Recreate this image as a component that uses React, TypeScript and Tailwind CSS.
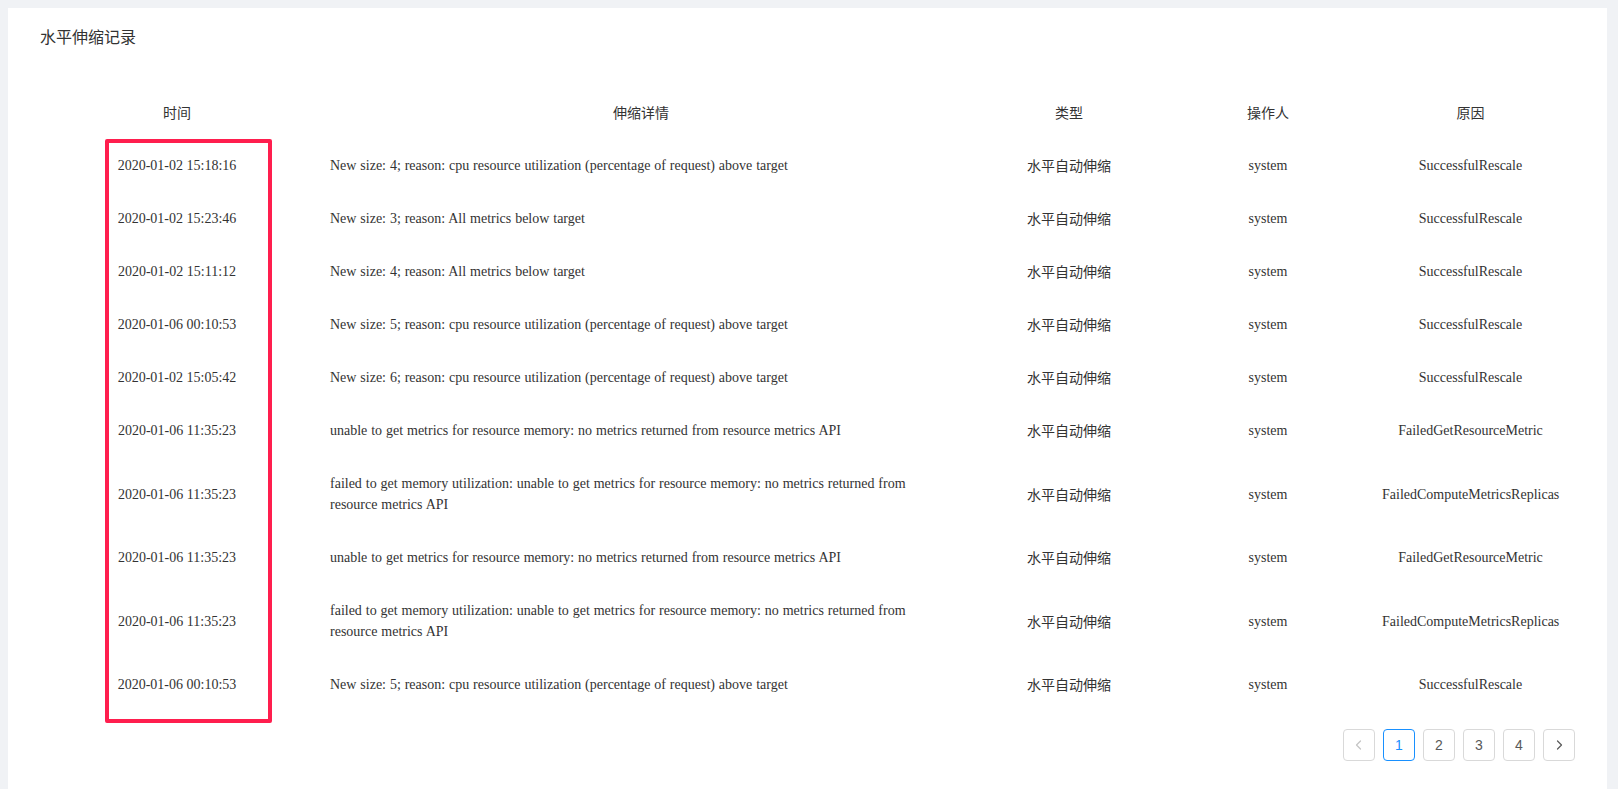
import React from "react"

type Record = {
  time: string
  detail: string
  type: string
  operator: string
  reason: string
}

const records: Record[] = [
  { time: "2020-01-02 15:18:16", detail: "New size: 4; reason: cpu resource utilization (percentage of request) above target", type: "水平自动伸缩", operator: "system", reason: "SuccessfulRescale" },
  { time: "2020-01-02 15:23:46", detail: "New size: 3; reason: All metrics below target", type: "水平自动伸缩", operator: "system", reason: "SuccessfulRescale" },
  { time: "2020-01-02 15:11:12", detail: "New size: 4; reason: All metrics below target", type: "水平自动伸缩", operator: "system", reason: "SuccessfulRescale" },
  { time: "2020-01-06 00:10:53", detail: "New size: 5; reason: cpu resource utilization (percentage of request) above target", type: "水平自动伸缩", operator: "system", reason: "SuccessfulRescale" },
  { time: "2020-01-02 15:05:42", detail: "New size: 6; reason: cpu resource utilization (percentage of request) above target", type: "水平自动伸缩", operator: "system", reason: "SuccessfulRescale" },
  { time: "2020-01-06 11:35:23", detail: "unable to get metrics for resource memory: no metrics returned from resource metrics API", type: "水平自动伸缩", operator: "system", reason: "FailedGetResourceMetric" },
  { time: "2020-01-06 11:35:23", detail: "failed to get memory utilization: unable to get metrics for resource memory: no metrics returned from resource metrics API", type: "水平自动伸缩", operator: "system", reason: "FailedComputeMetricsReplicas" },
  { time: "2020-01-06 11:35:23", detail: "unable to get metrics for resource memory: no metrics returned from resource metrics API", type: "水平自动伸缩", operator: "system", reason: "FailedGetResourceMetric" },
  { time: "2020-01-06 11:35:23", detail: "failed to get memory utilization: unable to get metrics for resource memory: no metrics returned from resource metrics API", type: "水平自动伸缩", operator: "system", reason: "FailedComputeMetricsReplicas" },
  { time: "2020-01-06 00:10:53", detail: "New size: 5; reason: cpu resource utilization (percentage of request) above target", type: "水平自动伸缩", operator: "system", reason: "SuccessfulRescale" },
]

function Chevron({ dir, color }: { dir: "left" | "right"; color: string }) {
  return (
    <svg width="12" height="12" viewBox="0 0 12 12" fill="none">
      <polyline
        points={dir === "left" ? "7.5,2 3.5,6 7.5,10" : "4.5,2 8.5,6 4.5,10"}
        stroke={color}
        strokeWidth="1.2"
        strokeLinecap="round"
        strokeLinejoin="round"
      />
    </svg>
  )
}

function Pagination() {
  const pages = [1, 2, 3, 4]
  return (
    <div className="flex justify-end gap-2 font-['Liberation_Sans',sans-serif] text-sm">
      <button className="flex h-8 w-8 items-center justify-center rounded border border-[#d9d9d9] bg-white">
        <Chevron dir="left" color="#c4c4c4" />
      </button>
      {pages.map((p) => (
        <button
          key={p}
          className={
            p === 1
              ? "flex h-8 w-8 items-center justify-center rounded border border-[#1890ff] bg-white text-[#1890ff]"
              : "flex h-8 w-8 items-center justify-center rounded border border-[#d9d9d9] bg-white text-[#595959]"
          }
        >
          {p}
        </button>
      ))}
      <button className="flex h-8 w-8 items-center justify-center rounded border border-[#d9d9d9] bg-white">
        <Chevron dir="right" color="#595959" />
      </button>
    </div>
  )
}

export default function App() {
  return (
    <div className="min-h-screen bg-[#f0f2f5] pt-2 pl-2 pr-[11px] font-['Liberation_Serif','Noto_Sans_CJK_SC',serif] text-[#333]">
      <div className="min-h-[800px] bg-white px-8 pt-4">
        <h2 className="font-['Noto_Sans_CJK_SC',sans-serif] text-base leading-6 text-[#333]">水平伸缩记录</h2>

        <div className="relative mt-[38px]">
          <table className="w-full table-fixed border-collapse text-sm">
            <colgroup>
              <col className="w-[274px]" />
              <col className="w-[654px]" />
              <col className="w-[202px]" />
              <col className="w-[196px]" />
              <col />
            </colgroup>
            <thead>
              <tr className="font-['Noto_Sans_CJK_SC',sans-serif]">
                <th className="px-4 py-4 text-center font-normal leading-[21px]">时间</th>
                <th className="px-4 py-4 text-center font-normal leading-[21px]">伸缩详情</th>
                <th className="px-4 py-4 text-center font-normal leading-[21px]">类型</th>
                <th className="px-4 py-4 text-center font-normal leading-[21px]">操作人</th>
                <th className="px-4 py-4 text-center font-normal leading-[21px]">原因</th>
              </tr>
            </thead>
            <tbody>
              {records.map((r, i) => (
                <tr key={i}>
                  <td className="px-4 py-4 text-center leading-[21px]">{r.time}</td>
                  <td className="py-4 pl-4 pr-[52px] text-left leading-[21px] [word-spacing:0.4px]">{r.detail}</td>
                  <td className="px-4 py-4 text-center font-['Noto_Sans_CJK_SC',sans-serif] leading-[21px]">{r.type}</td>
                  <td className="px-4 py-4 text-center leading-[21px]">{r.operator}</td>
                  <td className="px-4 py-4 text-center leading-[21px]">{r.reason}</td>
                </tr>
              ))}
            </tbody>
          </table>

          {/* highlight around the time column */}
          <div className="pointer-events-none absolute left-[65px] top-[53px] h-[584px] w-[167px] rounded-[2px] border-4 border-[#ff1e4e]" />
        </div>

        <div className="mt-[18px]">
          <Pagination />
        </div>
      </div>
    </div>
  )
}
